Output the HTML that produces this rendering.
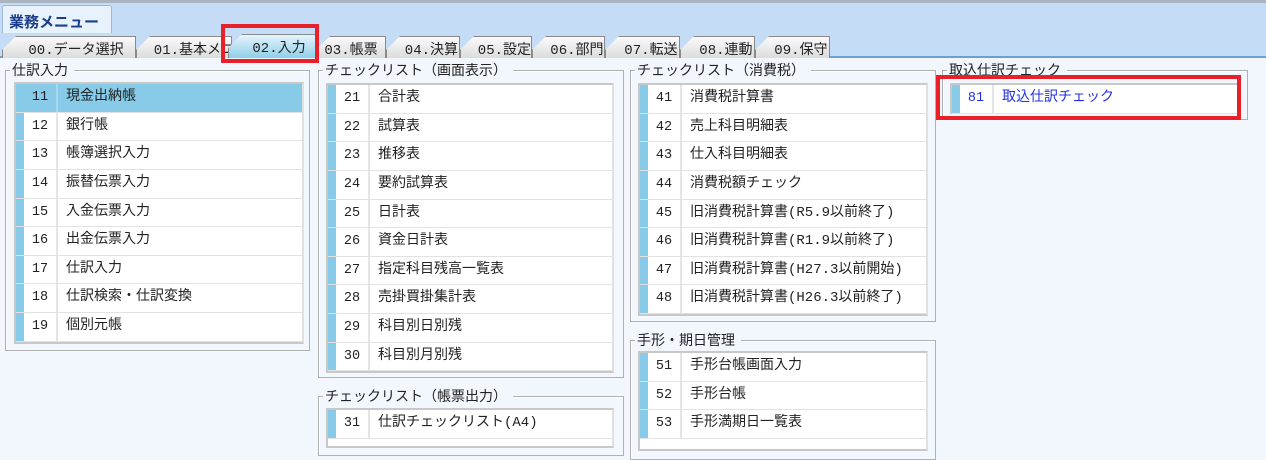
<!DOCTYPE html>
<html><head><meta charset="utf-8"><style>
*{box-sizing:border-box;margin:0;padding:0}
body{width:1266px;height:436px;overflow:hidden;background:#f2f7fd;font-family:"Liberation Mono","Noto Sans CJK JP",monospace;font-size:14px;color:#222;position:relative}
.top{position:absolute;left:0;top:0;width:1266px;height:33px;background:#c4dcf6;border-top:3px solid #aab4c0}
.mtab{position:absolute;left:2px;top:5px;width:110px;height:28px;background:#e8f2fc;border:1px solid #9fb8d4;border-bottom:none;border-radius:3px 3px 0 0;color:#1a3d8c;font-weight:bold;font-size:15px;padding:5px 0 0 6px;font-family:"Liberation Sans","Noto Sans CJK JP",sans-serif}
.tabbar{position:absolute;left:0;top:33px;width:1266px;height:25px;background:#c4dcf6;border-bottom:2px solid #6f9fd0}
.tab{position:absolute;top:3px;height:22px;background:linear-gradient(#fafafa,#dcdcdc);border:1px solid #8a8a8a;border-bottom:none;font-size:14px;padding:2px 0 0 0;text-align:center;clip-path:polygon(14px 0,100% 0,100% 100%,0 100%,0 14px);white-space:nowrap;overflow:hidden}
.tab.act{background:linear-gradient(#e6f4fb,#8ecfe9);top:1px;height:24px}
.box{position:absolute;border:1px solid #b0b0b0;box-shadow:inset 1px 1px 0 #fff}
.lg{position:absolute;top:-10px;left:4px;background:#f2f7fd;padding:0 6px 0 2px;font-size:14px;line-height:18px;font-family:"Liberation Sans","Noto Sans CJK JP",sans-serif}
.list{position:absolute;border:2px solid #c8c8c8;border-right-color:#e0e0e0;background:#fff}
.row{height:28.65px;display:flex;border-bottom:1px solid #e2e2e2;background:#fff}
.row .s{width:8px;background:#87cbe8;flex:none}
.row .n{width:34px;border-right:2px solid #e4e4e4;text-align:center;line-height:27px;flex:none;font-size:13.5px}
.row .t{padding-left:8px;line-height:27px;white-space:nowrap}
.row.sel{background:#87cbe8}
.row.sel .n{border-right-color:#a8d8ee}
.blue{color:#2233dd}
.red{position:absolute;border:4px solid #e8202a}
</style></head><body>
<div class="top"></div>
<div class="mtab">業務メニュー</div>
<div class="tabbar">
<div class="tab" style="left:2px;width:134px">　00.データ選択</div>
<div class="tab" style="left:136px;width:96px">&nbsp;&nbsp;01.基本メニュ</div>
<div class="tab act" style="left:228px;width:88px">　02.入力</div>
<div class="tab" style="left:316px;width:70px">03.帳票</div>
<div class="tab" style="left:386px;width:74px">&nbsp;&nbsp;04.決算</div>
<div class="tab" style="left:460px;width:72px">&nbsp;&nbsp;05.設定</div>
<div class="tab" style="left:532px;width:73px">&nbsp;&nbsp;06.部門</div>
<div class="tab" style="left:605px;width:75px">&nbsp;&nbsp;07.転送</div>
<div class="tab" style="left:680px;width:75px">&nbsp;&nbsp;08.連動</div>
<div class="tab" style="left:755px;width:75px">&nbsp;&nbsp;09.保守</div>
</div>

<div class="box" style="left:5px;top:70px;width:305px;height:281px"><div class="lg">仕訳入力</div></div>
<div class="list" style="left:14px;top:82px;width:290px;height:262px">
<div class="row sel"><div class="s"></div><div class="n">11</div><div class="t">現金出納帳</div></div>
<div class="row"><div class="s"></div><div class="n">12</div><div class="t">銀行帳</div></div>
<div class="row"><div class="s"></div><div class="n">13</div><div class="t">帳簿選択入力</div></div>
<div class="row"><div class="s"></div><div class="n">14</div><div class="t">振替伝票入力</div></div>
<div class="row"><div class="s"></div><div class="n">15</div><div class="t">入金伝票入力</div></div>
<div class="row"><div class="s"></div><div class="n">16</div><div class="t">出金伝票入力</div></div>
<div class="row"><div class="s"></div><div class="n">17</div><div class="t">仕訳入力</div></div>
<div class="row"><div class="s"></div><div class="n">18</div><div class="t">仕訳検索・仕訳変換</div></div>
<div class="row"><div class="s"></div><div class="n">19</div><div class="t">個別元帳</div></div>
</div>

<div class="box" style="left:318px;top:70px;width:306px;height:308px"><div class="lg">チェックリスト（画面表示）</div></div>
<div class="list" style="left:326px;top:83px;width:288px;height:290px">
<div class="row"><div class="s"></div><div class="n">21</div><div class="t">合計表</div></div>
<div class="row"><div class="s"></div><div class="n">22</div><div class="t">試算表</div></div>
<div class="row"><div class="s"></div><div class="n">23</div><div class="t">推移表</div></div>
<div class="row"><div class="s"></div><div class="n">24</div><div class="t">要約試算表</div></div>
<div class="row"><div class="s"></div><div class="n">25</div><div class="t">日計表</div></div>
<div class="row"><div class="s"></div><div class="n">26</div><div class="t">資金日計表</div></div>
<div class="row"><div class="s"></div><div class="n">27</div><div class="t">指定科目残高一覧表</div></div>
<div class="row"><div class="s"></div><div class="n">28</div><div class="t">売掛買掛集計表</div></div>
<div class="row"><div class="s"></div><div class="n">29</div><div class="t">科目別日別残</div></div>
<div class="row"><div class="s"></div><div class="n">30</div><div class="t">科目別月別残</div></div>
</div>

<div class="box" style="left:318px;top:396px;width:306px;height:60px"><div class="lg">チェックリスト（帳票出力）</div></div>
<div class="list" style="left:326px;top:408px;width:288px;height:40px">
<div class="row"><div class="s"></div><div class="n">31</div><div class="t">仕訳チェックリスト(A4)</div></div>
</div>

<div class="box" style="left:630px;top:70px;width:306px;height:252px"><div class="lg">チェックリスト（消費税）</div></div>
<div class="list" style="left:638px;top:83px;width:290px;height:233px">
<div class="row"><div class="s"></div><div class="n">41</div><div class="t">消費税計算書</div></div>
<div class="row"><div class="s"></div><div class="n">42</div><div class="t">売上科目明細表</div></div>
<div class="row"><div class="s"></div><div class="n">43</div><div class="t">仕入科目明細表</div></div>
<div class="row"><div class="s"></div><div class="n">44</div><div class="t">消費税額チェック</div></div>
<div class="row"><div class="s"></div><div class="n">45</div><div class="t">旧消費税計算書(R5.9以前終了)</div></div>
<div class="row"><div class="s"></div><div class="n">46</div><div class="t">旧消費税計算書(R1.9以前終了)</div></div>
<div class="row"><div class="s"></div><div class="n">47</div><div class="t">旧消費税計算書(H27.3以前開始)</div></div>
<div class="row"><div class="s"></div><div class="n">48</div><div class="t">旧消費税計算書(H26.3以前終了)</div></div>
</div>

<div class="box" style="left:630px;top:340px;width:306px;height:120px"><div class="lg">手形・期日管理</div></div>
<div class="list" style="left:638px;top:351px;width:290px;height:100px">
<div class="row"><div class="s"></div><div class="n">51</div><div class="t">手形台帳画面入力</div></div>
<div class="row"><div class="s"></div><div class="n">52</div><div class="t">手形台帳</div></div>
<div class="row"><div class="s"></div><div class="n">53</div><div class="t">手形満期日一覧表</div></div>
</div>

<div class="box" style="left:942px;top:70px;width:306px;height:50px"><div class="lg">取込仕訳チェック</div></div>
<div class="list" style="left:950px;top:83px;width:290px;height:31px">
<div class="row blue"><div class="s"></div><div class="n">81</div><div class="t">取込仕訳チェック</div></div>
</div>

<div class="red" style="left:221px;top:24px;width:98px;height:39px"></div>
<div class="red" style="left:936px;top:75px;width:305px;height:45px"></div>
</body></html>
